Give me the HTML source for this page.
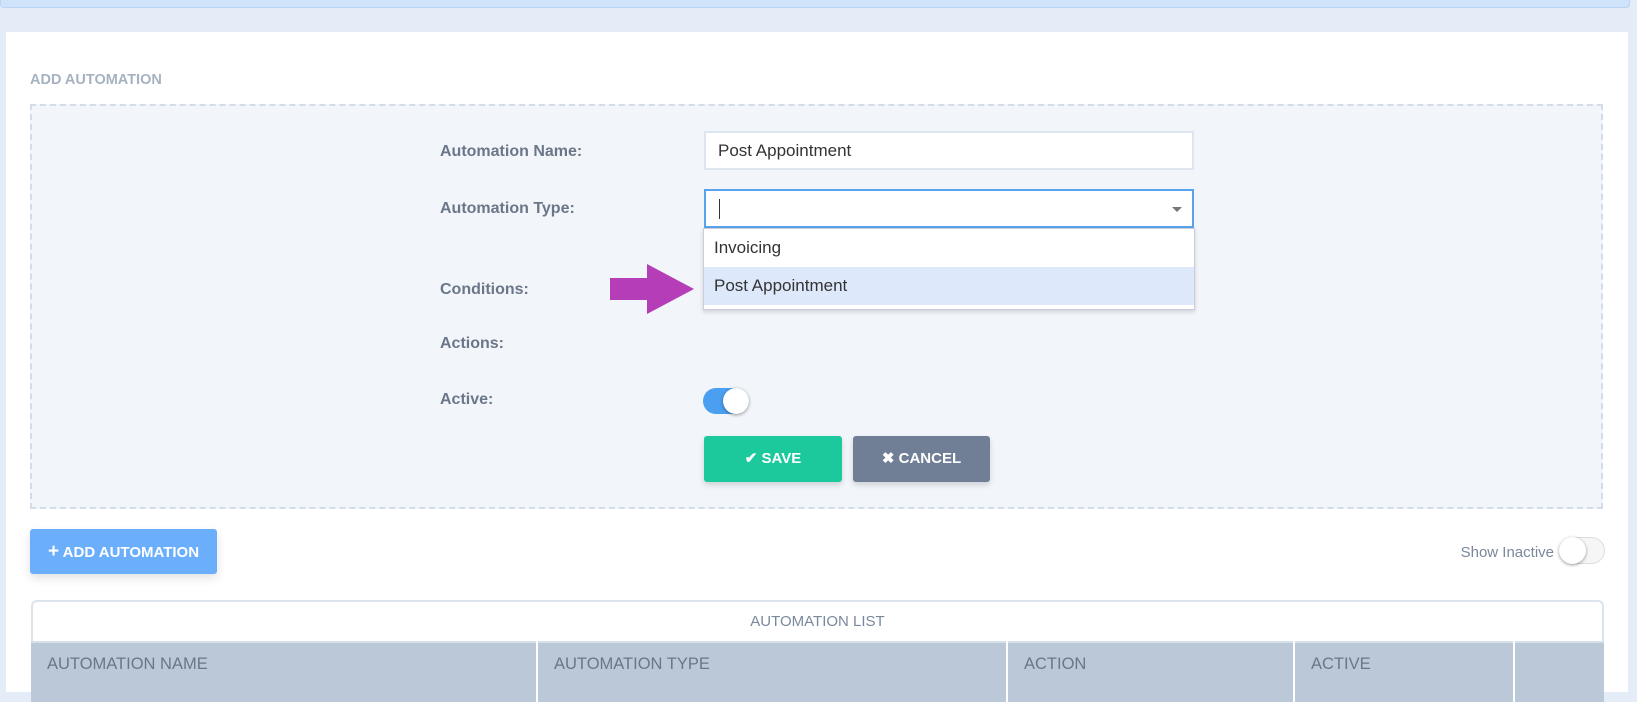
<!DOCTYPE html>
<html><head><style>
*{box-sizing:border-box;margin:0;padding:0}
body{width:1637px;height:683px;overflow:hidden;background:#e4ecf8;font-family:"Liberation Sans",sans-serif;position:relative}
.top{position:absolute;left:0;top:0;width:1630px;height:8px;background:#cfe3fb;border:1px solid #b9d5f5;border-top:none;border-radius:0 0 4px 4px}
.card{position:absolute;left:6px;top:32px;width:1622px;height:660px;background:#fff}
.ab{position:absolute}
.title{left:30px;top:72px;font-size:14.5px;font-weight:bold;color:#a6b2c2}
.dash{left:30px;top:104px;width:1573px;height:405px;background:#f2f5fa;border:2px dashed #d4dce7}
.lbl{font-size:16px;color:#6b7789;font-weight:bold;left:440px}
.inp{left:704px;width:490px;height:39px;background:#fff;border:2px solid #dfe5ee;font-size:17px;color:#333;padding:8px 12px}
.sel{border-color:#58a3ec}
.dd{left:703px;top:228px;width:492px;height:82px;background:#fff;border:1px solid #ccd;box-shadow:0 2px 4px rgba(0,0,0,.15);font-size:17px;color:#333}
.opt{height:38px;padding:9px 10px}
.btn{color:#fff;font-weight:bold;font-size:15px;text-align:center;border-radius:3px}
th{background:#bac8d8;color:#6b7789;font-weight:normal;font-size:16.5px;text-align:left;padding-left:16px;border-right:2px solid #fff;height:60px;vertical-align:top;padding-top:12px}
</style></head><body>
<div class="top"></div>
<div class="card"></div>
<div class="ab title">ADD AUTOMATION</div>
<div class="ab dash"></div>
<div class="ab lbl" style="top:143px">Automation Name:</div>
<div class="ab lbl" style="top:200px">Automation Type:</div>
<div class="ab lbl" style="top:281px">Conditions:</div>
<div class="ab lbl" style="top:335px">Actions:</div>
<div class="ab lbl" style="top:391px">Active:</div>
<div class="ab inp" style="top:131px">Post Appointment</div>
<div class="ab inp sel" style="top:189px"><span style="display:inline-block;width:1px;height:20px;background:#333;margin-left:1px"></span>
<span style="position:absolute;right:10px;top:16px;border:5px solid transparent;border-top:5px solid #777"></span></div>
<div class="ab dd"><div class="opt">Invoicing</div><div class="opt" style="background:#dde9fb">Post Appointment</div></div>
<svg class="ab" style="left:608px;top:262px" width="90" height="54"><polygon points="2,16 39,16 39,2 86,27 39,52 39,38 2,38" fill="#b53db7"/></svg>
<div class="ab" style="left:703px;top:388px;width:46px;height:26px;border-radius:13px;background:#4a9ff0"></div>
<div class="ab" style="left:723px;top:388px;width:26px;height:26px;border-radius:13px;background:#fff;box-shadow:0 1px 3px rgba(0,0,0,.4)"></div>
<div class="ab btn" style="left:704px;top:436px;width:138px;height:46px;background:#1bc99d;line-height:46px;box-shadow:0 3px 6px rgba(0,0,0,.15)">✔ SAVE</div>
<div class="ab btn" style="left:853px;top:436px;width:137px;height:46px;background:#717f96;line-height:46px;box-shadow:0 3px 6px rgba(0,0,0,.15)">✖ CANCEL</div>
<div class="ab btn" style="left:30px;top:529px;width:187px;height:45px;background:#6aaefc;line-height:45px;box-shadow:0 4px 10px rgba(0,0,0,.12)"><span style="font-size:19px">+</span> ADD AUTOMATION</div>
<div class="ab" style="left:1430px;top:544px;width:124px;text-align:right;font-size:15px;color:#7a889b">Show Inactive</div>
<div class="ab" style="left:1559px;top:537px;width:46px;height:27px;border-radius:14px;background:#f6f6f6;border:1px solid #ddd"></div>
<div class="ab" style="left:1559px;top:537px;width:27px;height:27px;border-radius:14px;background:#fff;box-shadow:0 1px 3px rgba(0,0,0,.4)"></div>
<div class="ab" style="left:31px;top:600px;width:1573px;height:100px;border:2px solid #dbe4ec;border-radius:6px 6px 0 0;background:#fff"></div>
<div class="ab" style="left:31px;top:613px;width:1573px;text-align:center;font-size:15px;color:#7a889b">AUTOMATION LIST</div>
<table class="ab" style="left:31px;top:641px;width:1573px;border-collapse:collapse;border-top:2px solid #d5e0ea">
<tr><th style="width:506px">AUTOMATION NAME</th><th style="width:470px">AUTOMATION TYPE</th><th style="width:287px">ACTION</th><th style="width:220px">ACTIVE</th><th style="border:none"></th></tr></table>
</body></html>
